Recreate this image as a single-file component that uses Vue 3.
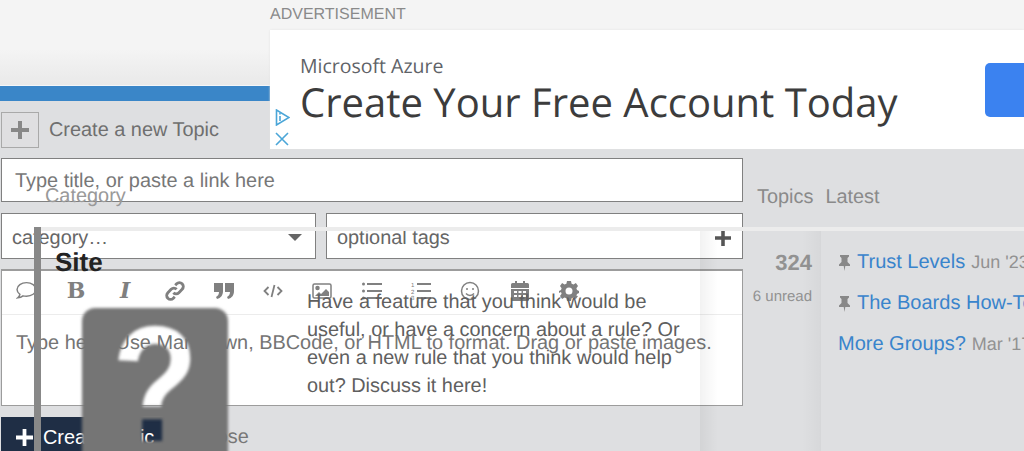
<script setup>
const tools = ['comment','b','i','link','quote','code','image','ul','ol','smile','cal','gear']
const topics = [
  { title: 'Trust Levels', date: "Jun '23", pin: true },
  { title: 'The Boards How-To', date: '', pin: true },
  { title: 'More Groups?', date: "Mar '17", pin: false }
]
</script>

<template>
  <div class="page">
    <header class="top"></header>
    <div class="bluebar"></div>

    <main class="content">
      <section class="composer">
        <div class="newtopic">
          <span class="plusbox">
            <svg width="18" height="18" viewBox="0 0 18 18"><path d="M7 0h4v7h7v4h-7v7H7v-7H0V7h7z" fill="#888"/></svg>
          </span>
          <span class="newtitle">Create a new Topic</span>
        </div>
        <div class="field title">Type title, or paste a link here</div>
        <div class="selects">
          <div class="field cat">
            <span>category…</span>
            <svg width="14" height="7" viewBox="0 0 14 7"><path d="M0 0h14L7 7z" fill="#666"/></svg>
          </div>
          <div class="field tags">
            <span>optional tags</span>
            <svg width="16" height="16" viewBox="0 0 18 18"><path d="M7 0h4v7h7v4h-7v7H7v-7H0V7h7z" fill="#555"/></svg>
          </div>
        </div>
        <div class="editor">
          <div class="toolbar">
            <span v-for="t in tools" :key="t" class="tool">
              <svg v-if="t==='comment'" width="21" height="21" viewBox="0 0 20 20" fill="none" stroke="#808080" stroke-width="1.4"><path d="M10 2.500c-4.900 0-9 2.800-9 6.500 0 1.900 1.100 3.500 2.700 4.700-.2 1.400-1 2.500-2 3.300 1.900-.1 3.700-.8 5-1.900.9.200 1.700.3 3.300.3 4.900 0 9-2.800 9-6.400s-4.100-6.500-9-6.500z"/></svg>
              <span v-else-if="t==='b'" class="glyph bold">B</span>
              <span v-else-if="t==='i'" class="glyph ital">I</span>
              <svg v-else-if="t==='link'" width="22" height="22" viewBox="0 0 20 20" fill="none" stroke="#808080" stroke-width="2.600"><path d="M8.500 11.500a3.500 3.500 0 0 0 5 0l3-3a3.500 3.500 0 0 0-5-5l-1.300 1.300"/><path d="M11.500 8.500a3.500 3.500 0 0 0-5 0l-3 3a3.500 3.500 0 0 0 5 5l1.300-1.300"/></svg>
              <svg v-else-if="t==='quote'" width="20" height="18" viewBox="0 0 20 18" fill="#808080"><path d="M0 1h9v8c0 4-2 7-6 8l-1-2c2-1 3-3 3-5H0zM11 1h9v8c0 4-2 7-6 8l-1-2c2-1 3-3 3-5h-5z"/></svg>
              <svg v-else-if="t==='code'" width="20" height="14" viewBox="0 0 20 14" fill="none" stroke="#808080" stroke-width="1.800"><path d="M5.500 3 1.500 7l4 4M14.500 3l4 4-4 4M11.500 1 8.500 13"/></svg>
              <svg v-else-if="t==='image'" width="20" height="18" viewBox="0 0 20 18" fill="none" stroke="#808080" stroke-width="1.500"><rect x="1" y="2" width="18" height="14" rx="1.500"/><circle cx="5.500" cy="6" r="1.500" fill="#808080"/><path d="M3 14l4-4 2 2 5-5 3 3v4z" fill="#808080" stroke="none"/></svg>
              <svg v-else-if="t==='ul'" width="20" height="18" viewBox="0 0 20 18" fill="#808080"><circle cx="1.500" cy="2" r="1.500"/><circle cx="1.500" cy="9" r="1.500"/><circle cx="1.500" cy="16" r="1.500"/><rect x="5" y="1" width="15" height="2"/><rect x="5" y="8" width="15" height="2"/><rect x="5" y="15" width="15" height="2"/></svg>
              <svg v-else-if="t==='ol'" width="20" height="20" viewBox="0 0 20 20" fill="#808080"><text x="0" y="6" class="olnum">1</text><text x="0" y="12.500" class="olnum">2</text><text x="0" y="19" class="olnum">3</text><rect x="6" y="2" width="14" height="2"/><rect x="6" y="9" width="14" height="2"/><rect x="6" y="16" width="14" height="2"/></svg>
              <svg v-else-if="t==='smile'" width="20" height="20" viewBox="0 0 20 20" fill="none" stroke="#808080" stroke-width="1.500"><circle cx="10" cy="10" r="8.500"/><circle cx="7" cy="8" r="1" fill="#808080" stroke="none"/><circle cx="13" cy="8" r="1" fill="#808080" stroke="none"/><path d="M6 12.500c2 2.500 6 2.500 8 0"/></svg>
              <svg v-else-if="t==='cal'" width="18" height="20" viewBox="0 0 18 20" fill="#808080"><path d="M4 0h2v2h6V0h2v2h2.500A1.500 1.500 0 0 1 18 3.500V7H0V3.500A1.500 1.500 0 0 1 1.500 2H4zM0 8h18v10.500a1.500 1.500 0 0 1-1.500 1.500h-15A1.500 1.500 0 0 1 0 18.500zM3 10v2h3v-2zm4.500 0v2h3v-2zm4.500 0v2h3v-2zM3 14v2h3v-2zm4.500 0v2h3v-2zm4.500 0v2h3v-2z" fill-rule="evenodd"/></svg>
              <svg v-else width="20" height="20" viewBox="0 0 20 20" fill="#808080"><path fill-rule="evenodd" d="M8 0h4l.6 2.700 1.900.8L16.900 2 19 5l-1.600 2.300.6 1.800L20 10v2l-2 .9-.6 1.800L19 15l-2.100 3-2.400-1.500-1.900.8L12 20H8l-.6-2.700-1.900-.8L3.100 18 1 15l1.600-2.300-.6-1.800L0 12v-2l2-.9.600-1.800L1 5l2.100-3 2.400 1.500 1.900-.8zM10 6.500a3.500 3.500 0 1 0 0 7 3.500 3.500 0 0 0 0-7z"/></svg>
            </span>
          </div>
          <div class="placeholder">Type here. Use Markdown, BBCode, or HTML to format. Drag or paste images.</div>
        </div>
        <div class="actions">
          <button class="create">
            <svg width="17" height="17" viewBox="0 0 18 18"><path d="M7 0h4v7h7v4h-7v7H7v-7H0V7h7z" fill="#fff"/></svg>
            <span>Create Topic</span>
          </button>
          <span class="close">Close</span>
        </div>
      </section>

      <aside class="board">
        <div class="heads"><span>Topics</span><span>Latest</span></div>
        <div class="rows">
          <div class="stats">
            <div class="count">324</div>
            <div class="unread">6 unread</div>
          </div>
          <ul class="list">
            <li v-for="t in topics" :key="t.title">
              <svg v-if="t.pin" width="13" height="16" viewBox="0 0 13 16" fill="#888"><path d="M2 0h9v1.500L9.500 3v4l2.500 2.500V11H7.300L6.500 16l-.8-5H1V9.500L3.500 7V3L2 1.500z"/></svg>
              <a>{{ t.title }}</a>
              <span v-if="t.date" class="date">{{ t.date }}</span>
            </li>
          </ul>
        </div>
      </aside>
    </main>

    <!-- advertisement floated above the page -->
    <div class="adlabel">ADVERTISEMENT</div>
    <div class="ad">
      <div class="adbrand">Microsoft Azure</div>
      <div class="adhead">Create Your Free Account Today</div>
      <div class="adbtn"></div>
      <svg class="adinfo" width="15" height="17" viewBox="0 0 15 17" fill="none" stroke="#4ba6d8" stroke-width="1.600"><path d="M1.500 1v15L14 8.500z"/><path d="M5 7v5M5 4v1.500"/></svg>
      <svg class="adx" width="14" height="14" viewBox="0 0 14 14" fill="none" stroke="#4ba6d8" stroke-width="1.600"><path d="M1 1l12 12M13 1 1 13"/></svg>
    </div>

    <!-- category card overlay -->
    <div class="shade"></div>
    <div class="catlabel">Category</div>
    <div class="card">
      <div class="site">Site</div>
      <p class="desc">Have a feature that you think would be<br>useful, or have a concern about a rule? Or<br>even a new rule that you think would help<br>out? Discuss it here!</p>
    </div>
    <svg class="logo" width="170" height="170" viewBox="0 0 170 170">
      <defs>
        <mask id="qm" maskUnits="userSpaceOnUse" x="0" y="0" width="170" height="170">
          <rect width="170" height="170" fill="#fff"/>
          <text transform="translate(85 141) scale(.86 1)" text-anchor="middle" class="qmark" fill="#000">?</text>
        </mask>
        <filter id="soft" x="-10%" y="-10%" width="120%" height="120%"><feGaussianBlur stdDeviation="1.500"/></filter>
      </defs>
      <g filter="url(#soft)"><rect x="12" y="8" width="146" height="190" rx="13" fill="#757575" mask="url(#qm)"/></g>
    </svg>
  </div>
</template>

<style>
html, body { margin: 0; }
</style>

<style scoped>
.page {
  position: relative;
  width: 1024px;
  height: 451px;
  overflow: hidden;
  background: #dedfe1;
  font-family: "Liberation Sans", Arial, sans-serif;
  text-rendering: geometricPrecision;
}
.top {
  height: 85px;
  background: linear-gradient(#f4f4f4 0, #f4f4f4 50px, #e9e9e9 85px);
  border-bottom: 1px solid #f4f6f8;
}
.bluebar { width: 270px; height: 15px; background: #3a86c8; }
.content { display: flex; }
.composer { width: 742px; padding: 11px 0 0 1px; flex: none; }
.newtopic { display: flex; align-items: center; gap: 11px; height: 36px; }
.plusbox {
  width: 36px; height: 34px; display: flex; align-items: center; justify-content: center;
  border: 1px solid #a9a9a9; background: #dfdfe1;
}
.newtitle { font-size: 19.900px; color: #6f6f6f; margin-left: -1px; }
.field {
  box-sizing: border-box;
  background: #fff;
  border: 1px solid #808080;
  font-size: 19.900px;
  line-height: 24px;
  color: #777;
  display: flex;
  align-items: center;
}
.title { margin-top: 10px; height: 44px; padding: 1px 0 0 13px; }
.selects { display: flex; gap: 10px; margin-top: 11px; }
.cat, .tags { height: 46px; justify-content: space-between; padding-top: 3px; color: #666; }
.cat { width: 315px; padding-left: 10px; padding-right: 13px; }
.tags { width: 417px; padding-left: 10px; padding-right: 11px; }
.editor {
  box-sizing: border-box;
  margin-top: 10px; height: 137px; background: #fff;
  border: 1px solid #9c9c9c; border-top-width: 2px;
}
.toolbar { display: flex; box-sizing: border-box; height: 44px; padding-bottom: 4px; border-bottom: 1px solid #ececec; }
.tool { width: 49.300px; flex: none; display: flex; align-items: center; justify-content: center; }
.glyph { font-family: "DejaVu Serif", serif; font-size: 22px; color: #808080; line-height: 1; }
.bold { font-weight: 700; }
.ital { font-style: italic; font-weight: 700; }
.olnum { font: 6px "Liberation Sans", Arial, sans-serif; }
.placeholder { padding: 16px 0 0 14px; font-size: 19.900px; line-height: 24px; color: #747474; white-space: nowrap; }
.actions { display: flex; align-items: center; margin-top: 11px; }
.create {
  display: flex; align-items: center; gap: 10px; height: 40px; width: 170px; padding: 0 0 0 15px;
  border: 0; background: #1f2e45; color: #fff; font: 19.900px "Liberation Sans", Arial, sans-serif;
}
.close { margin-left: 27px; font-size: 19.900px; color: #777; }
.board { margin-left: 14px; flex: 1; }
.heads { display: flex; gap: 12px; padding-top: 85px; font-size: 19.900px; line-height: 23px; color: #8a8a8a; }
.rows { display: flex; margin-left: -1px; }
.stats { width: 56px; padding-top: 41px; text-align: right; color: #929292; white-space: nowrap; direction: rtl; }
.count { font-size: 22px; font-weight: 700; line-height: 26px; }
.unread { font-size: 15px; margin-top: 12px; line-height: 18px; direction: ltr; width: 56px; display: flex; justify-content: flex-end; }
.list { list-style: none; margin: 0; padding: 33px 0 0 26px; white-space: nowrap; }
.list li { display: flex; align-items: center; gap: 6px; height: 41px; }
.list a { font-size: 20px; color: #3984cc; }
.date { font-size: 18px; color: #929292; }
.adlabel { position: absolute; left: 270px; top: 6px; font-size: 16px; line-height: 18px; color: #8a8a8a; }
.ad { position: absolute; left: 270px; top: 30px; width: 754px; height: 119px; background: #fff; box-shadow: 0 0 2px #e4e4e4; }
.adbrand { position: absolute; left: 30px; top: 22px; font: 19.500px "Open Sans", sans-serif; color: #5f6368; }
.adhead { position: absolute; left: 30px; top: 46px; font: 40px/52px "Open Sans", sans-serif; color: #3c3c3c; white-space: nowrap; }
.adbtn { position: absolute; left: 715px; top: 33px; width: 60px; height: 54px; border-radius: 5px; background: #3b82f0; }
.adinfo { position: absolute; left: 5px; top: 79px; }
.adx { position: absolute; left: 5px; top: 102px; }
.shade {
  position: absolute; left: 700px; top: 231px; width: 120px; height: 220px;
  border-right: 1px solid #d6d7d9;
  background:
    linear-gradient(90deg, rgba(0,0,0,.05), rgba(0,0,0,0) 18px),
    linear-gradient(270deg, rgba(0,0,0,.03), rgba(0,0,0,0) 18px);
  pointer-events: none;
}
.catlabel { position: absolute; left: 45px; top: 185px; font-size: 19.900px; line-height: 23px; color: #999; }
.card {
  position: absolute; left: 41px; top: 227px; right: 0; height: 224px;
  border-top: 4px solid #ececec; box-sizing: border-box;
}
.card::before { content: ""; position: absolute; left: -7px; top: -4px; width: 7px; height: 224px; background: #888; }
.site { position: absolute; left: 14px; top: 16px; font-size: 26px; font-weight: 700; line-height: 30px; color: #222; }
.desc { position: absolute; left: 266px; top: 57px; margin: 0; font-size: 19.900px; line-height: 28px; color: #5f5f5f; white-space: nowrap; }
.logo { position: absolute; left: 70px; top: 300px; }
.qmark { font: 700 165px "Liberation Sans", Arial, sans-serif; }
</style>
